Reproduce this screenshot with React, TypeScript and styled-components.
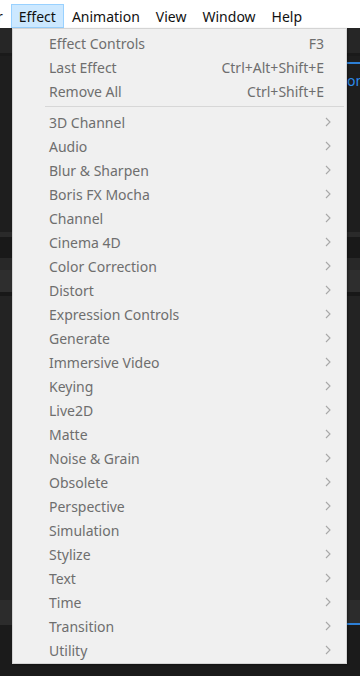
import React from 'react';
import styled, { createGlobalStyle } from 'styled-components';

const GlobalStyle = createGlobalStyle`
  html, body {
    margin: 0;
    padding: 0;
    background: #1f1f1f;
  }
  * { box-sizing: border-box; }
`;

const topItems = [
  { label: 'Effect Controls', shortcut: 'F3' },
  { label: 'Last Effect', shortcut: 'Ctrl+Alt+Shift+E' },
  { label: 'Remove All', shortcut: 'Ctrl+Shift+E' },
];

const categories = [
  '3D Channel', 'Audio', 'Blur & Sharpen', 'Boris FX Mocha', 'Channel', 'Cinema 4D',
  'Color Correction', 'Distort', 'Expression Controls', 'Generate', 'Immersive Video',
  'Keying', 'Live2D', 'Matte', 'Noise & Grain', 'Obsolete', 'Perspective', 'Simulation',
  'Stylize', 'Text', 'Time', 'Transition', 'Utility',
];

// полосы панелей приложения за меню
const bands = [
  { h: 25, c: '#262626' },
  { h: 3, c: '#1a1a1a' },
  { h: 176, c: '#1e1e1e' },
  { h: 5, c: '#2a2a2a' },
  { h: 21, c: '#191919' },
  { h: 12, c: '#282828' },
  { h: 22, c: '#2e2e2e' },
  { h: 4, c: '#181818' },
  { h: 304, c: '#232323' },
  { h: 25, c: '#2c2c2c' },
  { h: 51, c: '#1b1b1b' },
];

function Chevron() {
  return (
    <svg width="6" height="10" viewBox="0 0 6 10">
      <path d="M1 1 L5 5 L1 9" fill="none" stroke="#a8a8a8" strokeWidth="1.1" />
    </svg>
  );
}

function App() {
  return (
    <Screen>
      <GlobalStyle />
      <MenuBar>
        <BarItem>r</BarItem>
        <BarItem $active>Effect</BarItem>
        <BarItem>Animation</BarItem>
        <BarItem>View</BarItem>
        <BarItem>Window</BarItem>
        <BarItem>Help</BarItem>
      </MenuBar>

      <Workspace>
        {bands.map((b, i) => (
          <Band key={i} style={{ height: b.h, background: b.c }} />
        ))}
        <SideText>on</SideText>
        <BlueLine $top={34} />
        <BlueLine $top={595} />
      </Workspace>

      <Dropdown>
        {topItems.map((it) => (
          <Item key={it.label}>
            <Label>{it.label}</Label>
            <Shortcut>{it.shortcut}</Shortcut>
          </Item>
        ))}
        <Separator />
        {categories.map((c) => (
          <Item key={c}>
            <Label>{c}</Label>
            <Arrow><Chevron /></Arrow>
          </Item>
        ))}
      </Dropdown>
    </Screen>
  );
}

const Screen = styled.div`
  position: relative;
  width: 360px;
  height: 676px;
  overflow: hidden;
  font-family: "Noto Sans", "Open Sans", sans-serif;
`;

const MenuBar = styled.div`
  display: flex;
  align-items: center;
  height: 28px;
  background: #ffffff;
  padding: 4px 0 0 0;
  margin-left: -11px;
`;

const BarItem = styled.div<{ $active?: boolean }>`
  height: 24px;
  display: flex;
  align-items: center;
  padding: 0 7px;
  font-size: 14px;
  color: #111;
  border: 1px solid ${(p) => (p.$active ? '#99d1ff' : 'transparent')};
  background: ${(p) => (p.$active ? '#cce8ff' : 'transparent')};
`;

const Workspace = styled.div`
  position: relative;
  display: flex;
  flex-direction: column;
`;

const Band = styled.div`
  width: 100%;
`;

const SideText = styled.div`
  position: absolute;
  top: 44px;
  left: 347px;
  width: 13px;
  overflow: hidden;
  color: #2d8ceb;
  font-size: 14px;
  line-height: 18px;
`;

const BlueLine = styled.div<{ $top: number }>`
  position: absolute;
  top: ${(p) => p.$top}px;
  right: 0;
  width: 14px;
  height: 2px;
  background: #2d7fd6;
`;

const Dropdown = styled.div`
  position: absolute;
  top: 28px;
  left: 12px;
  width: 335px;
  height: 636px;
  background: #f0f0f0;
  border: 1px solid #d4d4d4;
  padding: 2px;
  box-shadow: 1px 1px 2px rgba(0, 0, 0, 0.35);
`;

const Item = styled.div`
  display: flex;
  align-items: center;
  height: 24px;
  padding: 0 20px 0 34px;
  font-size: 14px;
  color: #6e6e6e;
`;

const Label = styled.span`
  flex: 1;
  white-space: nowrap;
`;

const Shortcut = styled.span`
  white-space: nowrap;
`;

const Arrow = styled.span`
  display: flex;
  align-items: center;
  margin-right: -7px;
`;

const Separator = styled.div`
  height: 7px;
  margin-left: 30px;
  display: flex;
  align-items: center;
  &::after {
    content: '';
    flex: 1;
    height: 1px;
    background: #d7d7d7;
  }
`;

export default App;
